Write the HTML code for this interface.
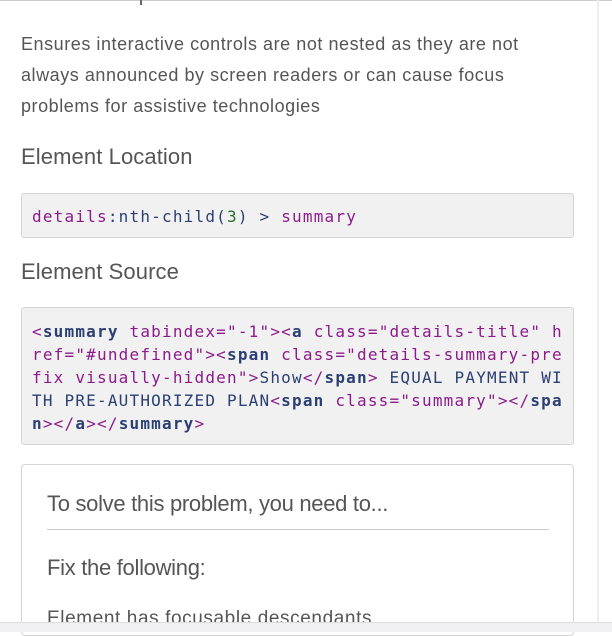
<!DOCTYPE html>
<html><head><style>
body{margin:0;width:612px;height:631px;overflow:hidden;background:#fff;font-family:"Liberation Sans",sans-serif;color:#555;position:relative}
.top{position:absolute;left:0;top:0;width:612px;height:1px;background:#ccc}
.tick{position:absolute;left:140px;top:0;width:2px;height:5px;background:#666}
.vr{position:absolute;left:597px;top:0;width:2px;height:631px;background:#eee}
.bot{position:absolute;left:0;top:622px;width:612px;height:9px;background:#f0f0f2;border-top:1px solid #ddd}
p{position:absolute;left:21px;top:29px;margin:0;font-size:18px;line-height:31px;width:530px;letter-spacing:0.55px;color:#555}
h3{position:absolute;left:21px;margin:0;font-weight:normal;font-size:22px;color:#555;letter-spacing:0.1px}
.code{position:absolute;left:21px;width:541px;background:#f1f1f1;border:1px solid #d4d4d4;border-radius:3px;padding:0 0 0 10px;font-family:"DejaVu Sans Mono",monospace;font-size:16px;letter-spacing:1.2px;line-height:23px;color:#8b1a8b;white-space:pre}
.t{color:#2b3f73;font-weight:bold}.x{color:#2b3f73}.g{color:#2b6b2b}
.card{position:absolute;left:21px;top:464px;width:551px;height:170px;border:1px solid #d4d4d4;border-radius:4px}
.card h4{position:absolute;left:25px;margin:0;font-weight:normal;font-size:22px;color:#555;letter-spacing:-0.3px}
.card hr{position:absolute;left:25px;top:64px;width:502px;margin:0;border:0;border-top:1px solid #ccc}
</style></head><body>
<div class="top"></div><div class="tick"></div><div class="vr"></div>
<p>Ensures interactive controls are not nested as they are not always announced by screen readers or can cause focus problems for assistive technologies</p>
<h3 style="top:144px">Element Location</h3>
<div class="code" style="top:193px;height:43px;line-height:45px">details<span class="x">:nth-child(</span><span class="g">3</span><span class="x">) &gt; </span>summary</div>
<h3 style="top:259px">Element Source</h3>
<div class="code" style="top:307px;height:114px;padding-top:12px;padding-bottom:10px;line-height:23px">&lt;<span class="t">summary</span> tabindex="-1"&gt;&lt;<span class="t">a</span> class="details-title" h
ref="#undefined"&gt;&lt;<span class="t">span</span> class="details-summary-pre
fix visually-hidden"&gt;<span class="x">Show</span>&lt;/<span class="t">span</span>&gt;<span class="x"> EQUAL PAYMENT WI
TH PRE-AUTHORIZED PLAN</span>&lt;<span class="t">span</span> class="summary"&gt;&lt;/<span class="t">spa
n</span>&gt;&lt;/<span class="t">a</span>&gt;&lt;/<span class="t">summary</span>&gt;</div>
<div class="card">
<h4 style="top:26px">To solve this problem, you need to...</h4>
<hr>
<h4 style="top:90px">Fix the following:</h4>
<h4 style="top:143px;font-size:19px;letter-spacing:0.6px">Element has focusable descendants</h4>
</div>
<div class="bot"></div>
</body></html>
